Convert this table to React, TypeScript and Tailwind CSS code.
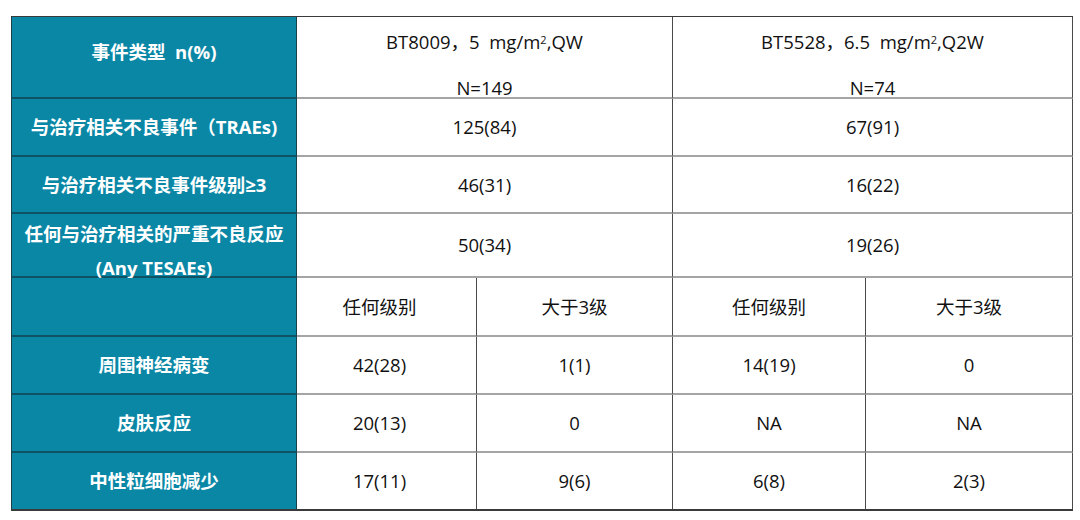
const font = { fontFamily: '"Open Sans", "Noto Sans CJK SC", sans-serif' };

const head =
  "bg-[#0b87a6] text-white font-bold text-[18.5px] flex items-center justify-center text-center border-l border-l-[#1d3f48] border-r border-r-[#16404b] border-b-2 border-b-[#0f5263]";
const cell =
  "text-[#111] text-[18.5px] flex items-center justify-center text-center border-r border-r-[#4a4a4a] border-b-2 border-b-[#a5a5a5]";

const lower = [
  ["周围神经病变", "42(28)", "1(1)", "14(19)", "0"],
  ["皮肤反应", "20(13)", "0", "NA", "NA"],
  ["中性粒细胞减少", "17(11)", "9(6)", "6(8)", "2(3)"],
];

export default function App() {
  return (
    <div className="w-[1080px] h-[520px] bg-white pt-[16px] pl-[11px]" style={font}>
      <div className="grid w-[1062px] grid-cols-[286px_180px_196px_193px_207px] grid-rows-[82px_58px_57px_64px_59px_58px_58px_56px] border-t border-t-[#3a3a3a] border-b-2 border-b-[#3a3a3a]">
        {/* header row */}
        <div className={head + " !items-start pt-[23px] leading-[24px]"}>事件类型&nbsp; n(%)</div>
        <div className={cell + " col-span-2 !flex-col !justify-start pt-[13px] gap-[22px] leading-[24px]"}>
          <span>
            BT8009，5&nbsp; mg/m<sup className="text-[11px]">2</sup>,QW
          </span>
          <span>N=149</span>
        </div>
        <div className={cell + " col-span-2 !flex-col !justify-start pt-[13px] gap-[22px] leading-[24px]"}>
          <span>
            BT5528，6.5&nbsp; mg/m<sup className="text-[11px]">2</sup>,Q2W
          </span>
          <span>N=74</span>
        </div>

        <div className={head}>与治疗相关不良事件（TRAEs)</div>
        <div className={cell + " col-span-2"}>125(84)</div>
        <div className={cell + " col-span-2"}>67(91)</div>

        <div className={head}>与治疗相关不良事件级别≥3</div>
        <div className={cell + " col-span-2"}>46(31)</div>
        <div className={cell + " col-span-2"}>16(22)</div>

        <div className={head + " !flex-col !justify-start pt-[3px] leading-[34px]"}>
          <span>任何与治疗相关的严重不良反应</span>
          <span>(Any TESAEs)</span>
        </div>
        <div className={cell + " col-span-2"}>50(34)</div>
        <div className={cell + " col-span-2"}>19(26)</div>

        <div className={head}></div>
        <div className={cell + " pr-[14px]"}>任何级别</div>
        <div className={cell}>大于3级</div>
        <div className={cell}>任何级别</div>
        <div className={cell}>大于3级</div>

        {lower.map((r, i) => (
          <div key={i} className="contents">
            <div className={head + (i === 2 ? " !border-b-0" : "")}>{r[0]}</div>
            <div className={cell + " pr-[14px]" + (i === 2 ? " !border-b-0" : "")}>{r[1]}</div>
            <div className={cell + (i === 2 ? " !border-b-0" : "")}>{r[2]}</div>
            <div className={cell + (i === 2 ? " !border-b-0" : "")}>{r[3]}</div>
            <div className={cell + (i === 2 ? " !border-b-0" : "")}>{r[4]}</div>
          </div>
        ))}
      </div>
    </div>
  );
}
